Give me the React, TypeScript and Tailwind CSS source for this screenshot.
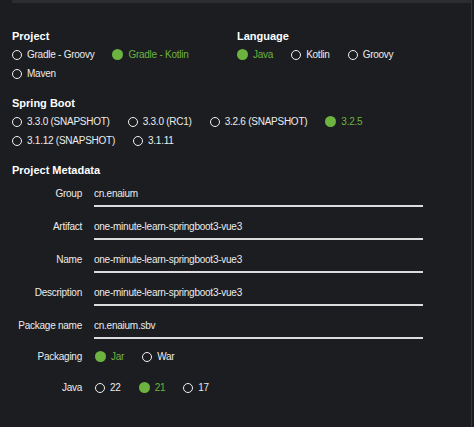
import React from "react";

type Option = { label: string; checked?: boolean };

const Radio: React.FC<Option> = ({ label, checked }) => (
	<div className="flex items-center gap-[5px]">
		{checked ? (
			<span className="w-[11px] h-[11px] rounded-full bg-[#6db33f]"></span>
		) : (
			<span className="w-[10px] h-[10px] rounded-full border-[1.7px] border-[#f2f2f2]"></span>
		)}
		<span className={checked ? "text-[#6db33f]" : "text-[#ececec]"}>{label}</span>
	</div>
);

const RadioRow: React.FC<{ options: Option[]; className?: string }> = ({ options, className }) => (
	<div className={"flex flex-wrap gap-x-[18px] " + (className ?? "")}>
		{options.map((o) => (
			<div key={o.label} className="h-[19px] flex items-center">
				<Radio {...o} />
			</div>
		))}
	</div>
);

const Heading: React.FC<{ children: React.ReactNode }> = ({ children }) => (
	<h2 className="text-[11px] font-bold leading-[14px] tracking-normal text-white">{children}</h2>
);

const Field: React.FC<{ label: string; value: string }> = ({ label, value }) => (
	<div className="flex items-start gap-[12px]">
		<div className="w-[70px] h-[24px] flex items-center justify-end text-[#ececec] whitespace-nowrap">{label}</div>
		<div className="w-[329px] h-[26px] flex items-center border-b-2 border-[#dcdcdc] text-[#ececec]">{value}</div>
	</div>
);

const ChoiceField: React.FC<{ label: string; options: Option[] }> = ({ label, options }) => (
	<div className="flex items-center gap-[13px]">
		<div className="w-[70px] text-right text-[#ececec]">{label}</div>
		<RadioRow options={options} />
	</div>
);

export default function App() {
	return (
		<div
			className="w-[474px] h-[427px] bg-[#1b1d21] text-[10px] tracking-[-0.25px] overflow-hidden"
			style={{ fontFamily: '"Liberation Sans", Arial, sans-serif' }}
		>
			<div className="w-[472px] h-full border-r border-[#34363b]">
				<div className="ml-[12px] h-[3px] bg-[#2b2d31]"></div>
				<div className="pl-[12px] pt-[26px]">
					<div className="flex">
						<div className="w-[225px]">
							<Heading>Project</Heading>
							<RadioRow
								className="mt-[2px]"
								options={[
									{ label: "Gradle - Groovy" },
									{ label: "Gradle - Kotlin", checked: true },
									{ label: "Maven" },
								]}
							/>
						</div>
						<div>
							<Heading>Language</Heading>
							<RadioRow
								className="mt-[2px]"
								options={[{ label: "Java", checked: true }, { label: "Kotlin" }, { label: "Groovy" }]}
							/>
						</div>
					</div>

					<div className="mt-[13px]">
						<Heading>Spring Boot</Heading>
						<RadioRow
							className="mt-[2px] w-[400px]"
							options={[
								{ label: "3.3.0 (SNAPSHOT)" },
								{ label: "3.3.0 (RC1)" },
								{ label: "3.2.6 (SNAPSHOT)" },
								{ label: "3.2.5", checked: true },
								{ label: "3.1.12 (SNAPSHOT)" },
								{ label: "3.1.11" },
							]}
						/>
					</div>

					<div className="mt-[13px]">
						<Heading>Project Metadata</Heading>
						<div className="mt-[4px] flex flex-col gap-[7px]">
							<Field label="Group" value="cn.enaium" />
							<Field label="Artifact" value="one-minute-learn-springboot3-vue3" />
							<Field label="Name" value="one-minute-learn-springboot3-vue3" />
							<Field label="Description" value="one-minute-learn-springboot3-vue3" />
							<Field label="Package name" value="cn.enaium.sbv" />
						</div>
						<div className="mt-[8px] flex flex-col gap-[12px]">
							<ChoiceField label="Packaging" options={[{ label: "Jar", checked: true }, { label: "War" }]} />
							<ChoiceField
								label="Java"
								options={[{ label: "22" }, { label: "21", checked: true }, { label: "17" }]}
							/>
						</div>
					</div>
				</div>
			</div>
		</div>
	);
}
